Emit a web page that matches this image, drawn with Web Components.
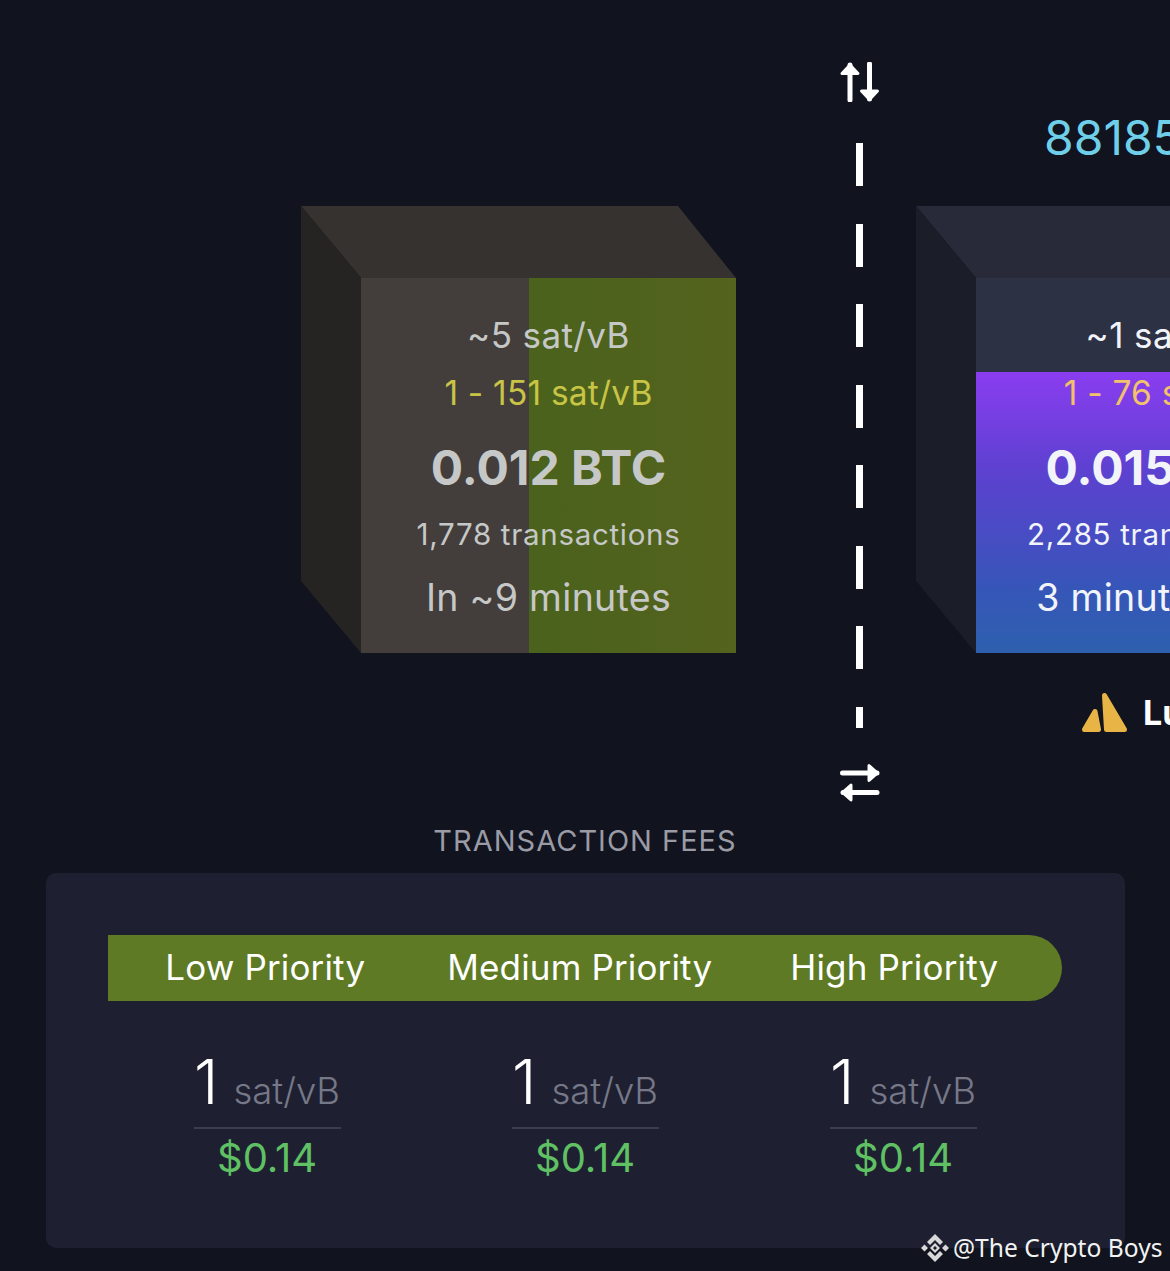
<!DOCTYPE html>
<html lang="en">
<head>
<meta charset="utf-8">
<title>Transaction fees</title>
<style>
    html, body { margin: 0; background: #11131e; }
    body { width: 1170px; height: 1271px; overflow: hidden; font-family: Inter, "Liberation Sans", sans-serif; }
</style>
</head>
<body>
<fee-page>
    <chain-row>
        <chain-block slot="left" top="#36322f" side="#262423" front="linear-gradient(90deg, #433e3c 168px, #4a621c 168px, #54631e 100%)" color="#c6c8c7" range="#c8c445">
            <span slot="fee">~5 sat/vB</span>
            <span slot="range">1 - 151 sat/vB</span>
            <span slot="size">0.012 BTC</span>
            <span slot="count">1,778 transactions</span>
            <span slot="time">In ~9 minutes</span>
        </chain-block>
        <chain-divider slot="divider"></chain-divider>
        <chain-block slot="right" top="#282a39" side="#1b1d29" front="linear-gradient(180deg, #2d3144 94px, #8a3df0 94px, #5d41d0 192px, #3656b8 312px, #2d60ae 100%)" color="#f2f4fa" range="#f2c26b" height="88185" pool="Luxor">
            <span slot="fee">~1 sat/vB</span>
            <span slot="range">1 - 76 sat/vB</span>
            <span slot="size">0.015 BTC</span>
            <span slot="count">2,285 transactions</span>
            <span slot="time">3 minutes ago</span>
        </chain-block>
    </chain-row>
    <fee-card title="TRANSACTION FEES">
        <fee-cell sats="1" usd="$0.14"></fee-cell>
        <fee-cell sats="1" usd="$0.14"></fee-cell>
        <fee-cell sats="1" usd="$0.14"></fee-cell>
    </fee-card>
    <water-mark>@The Crypto Boys</water-mark>
</fee-page>

<script>
class FeePage extends HTMLElement {
    constructor() {
        super()
        const shadowRoot = this.attachShadow({mode: "open"})
        shadowRoot.innerHTML = /* html */`
            <style>
                :host {
                    display: block;
                    position: relative;
                    width: 1170px;
                    height: 1271px;
                    overflow: hidden;
                    color: #fff;
                }
            </style>
            <slot></slot>
        `
    }
}

class ChainRow extends HTMLElement {
    constructor() {
        super()
        const shadowRoot = this.attachShadow({mode: "open"})
        shadowRoot.innerHTML = /* html */`
            <style>
                :host {
                    display: flex;
                    align-items: flex-start;
                    height: 825px;
                    padding-left: 301px;
                    width: 869px;
                }
                ::slotted([slot="left"]) { margin-top: 206px; }
                ::slotted([slot="divider"]) { margin: 62px 36px 0 104px; }
                ::slotted([slot="right"]) { margin-top: 206px; }
            </style>
            <slot name="left"></slot>
            <slot name="divider"></slot>
            <slot name="right"></slot>
        `
    }
}

class ChainBlock extends HTMLElement {
    constructor() {
        super()
        const shadowRoot = this.attachShadow({mode: "open"})
        const height = this.getAttribute("height")
        const pool = this.getAttribute("pool")

        shadowRoot.innerHTML = /* html */`
            <style>
                :host {
                    display: block;
                    position: relative;
                    flex: none;
                    width: 435px;
                    height: 447px;
                }
                .box {
                    display: grid;
                    grid-template-columns: 60px 375px;
                    grid-template-rows: 72px 375px;
                }
                .top {
                    grid-area: 1 / 1 / 2 / 3;
                    background: ${this.getAttribute("top")};
                    clip-path: polygon(0 0, 377px 0, 435px 72px, 60px 72px);
                }
                .side {
                    grid-area: 1 / 1 / 3 / 2;
                    background: ${this.getAttribute("side")};
                    clip-path: polygon(0 0, 60px 72px, 60px 447px, 0 375px);
                }
                .front {
                    grid-area: 2 / 2 / 3 / 3;
                    display: flex;
                    flex-direction: column;
                    align-items: center;
                    background: ${this.getAttribute("front")};
                    color: ${this.getAttribute("color")};
                    white-space: nowrap;
                }
                .fee { font-size: 35px; line-height: 40px; margin-top: 37px; letter-spacing: .4px; }
                .range { font-size: 33.5px; line-height: 40px; margin-top: 18px; letter-spacing: .2px; color: ${this.getAttribute("range")}; }
                .size { font-size: 48px; line-height: 54px; font-weight: 700; margin-top: 28px; }
                .count { font-size: 29.5px; line-height: 36px; margin-top: 21px; letter-spacing: .7px; }
                .time { font-size: 37.5px; line-height: 44px; margin-top: 24px; letter-spacing: .3px; }
                .height {
                    position: absolute;
                    left: 128px;
                    top: -97px;
                    font-size: 48px;
                    line-height: 58px;
                    color: #6fcfe8;
                }
                .pool {
                    position: absolute;
                    left: 165px;
                    top: 486px;
                    display: flex;
                    align-items: center;
                    gap: 16px;
                    font-size: 34px;
                    line-height: 40px;
                    font-weight: 700;
                }
            </style>
            ${height ? `<div class="height">${height}</div>` : ""}
            <div class="box">
                <div class="top"></div>
                <div class="side"></div>
                <div class="front">
                    <div class="fee"><slot name="fee"></slot></div>
                    <div class="range"><slot name="range"></slot></div>
                    <div class="size"><slot name="size"></slot></div>
                    <div class="count"><slot name="count"></slot></div>
                    <div class="time"><slot name="time"></slot></div>
                </div>
            </div>
            ${pool ? `<div class="pool">
                <svg width="46" height="41" viewBox="0 0 46 41">
                    <path d="M3.5 37.5 14 19.5 17.5 37.5Z M23.5 3.5 25.5 37.5 43.5 37.5Z" fill="#e8b445" stroke="#e8b445" stroke-width="5" stroke-linejoin="round"/>
                </svg>
                <span>${pool}</span>
            </div>` : ""}
        `
    }
}

class ChainDivider extends HTMLElement {
    constructor() {
        super()
        const shadowRoot = this.attachShadow({mode: "open"})
        shadowRoot.innerHTML = /* html */`
            <style>
                :host {
                    display: flex;
                    flex: none;
                    flex-direction: column;
                    align-items: center;
                    width: 40px;
                }
                svg { display: block; }
                .line {
                    width: 6.5px;
                    height: 585px;
                    margin: 41px 1px 35px 0;
                    background: repeating-linear-gradient(180deg, #fff 0 43px, transparent 43px 80.5px);
                }
            </style>
            <svg width="40" height="40" viewBox="0 0 40 40" fill="#fff" stroke="#fff" stroke-linejoin="round" stroke-linecap="round">
                <path d="M10 3V38" fill="none" stroke-width="5"/>
                <path d="M2 11.5 10 3 18 11.5Z" stroke-width="3"/>
                <path d="M29.5 2V37" fill="none" stroke-width="5"/>
                <path d="M21.5 29 29.5 37.5 37.5 29Z" stroke-width="3"/>
            </svg>
            <div class="line"></div>
            <svg width="40" height="40" viewBox="0 0 40 40" fill="#fff" stroke="#fff" stroke-linejoin="round" stroke-linecap="round">
                <path d="M2.5 10H37" fill="none" stroke-width="5"/>
                <path d="M29 2.5 37.5 10 29 17.5Z" stroke-width="3"/>
                <path d="M3 29.5H37" fill="none" stroke-width="5"/>
                <path d="M11 22 2.5 29.5 11 37Z" stroke-width="3"/>
            </svg>
        `
    }
}

class FeeCard extends HTMLElement {
    constructor() {
        super()
        const shadowRoot = this.attachShadow({mode: "open"})
        shadowRoot.innerHTML = /* html */`
            <style>
                :host { display: block; }
                h2 {
                    margin: 0 0 16px;
                    text-align: center;
                    font-size: 29px;
                    line-height: 32px;
                    font-weight: 400;
                    letter-spacing: 1px;
                    color: #9a9ba5;
                }
                .card {
                    box-sizing: border-box;
                    width: 1079px;
                    height: 375px;
                    margin-left: 46px;
                    padding: 62px 63px 0 62px;
                    background: #1e2031;
                    border-radius: 10px;
                }
                .head {
                    box-sizing: border-box;
                    display: grid;
                    grid-template-columns: repeat(3, 314.5px);
                    height: 66px;
                    padding-bottom: 2px;
                    align-items: center;
                    text-align: center;
                    font-size: 35px;
                    letter-spacing: .15px;
                    background: #5e7a24;
                    border-radius: 0 33px 33px 0;
                }
                .cells {
                    display: grid;
                    grid-template-columns: repeat(3, 318px);
                    margin-top: 46px;
                }
            </style>
            <h2>${this.getAttribute("title")}</h2>
            <div class="card">
                <div class="head">
                    <div>Low Priority</div>
                    <div>Medium Priority</div>
                    <div>High Priority</div>
                </div>
                <div class="cells"><slot></slot></div>
            </div>
        `
    }
}

class FeeCell extends HTMLElement {
    constructor() {
        super()
        const shadowRoot = this.attachShadow({mode: "open"})
        shadowRoot.innerHTML = /* html */`
            <style>
                :host {
                    display: flex;
                    flex-direction: column;
                    align-items: center;
                }
                .rate {
                    box-sizing: border-box;
                    width: 147px;
                    height: 82px;
                    display: flex;
                    align-items: baseline;
                    justify-content: center;
                    gap: 15px;
                    border-bottom: 2px solid #3a3c50;
                    line-height: 70px;
                }
                .num { font-size: 62px; font-weight: 300; }
                .unit { font-size: 36.5px; font-weight: 300; color: #767888; }
                .usd { margin-top: 5px; font-size: 40px; line-height: 48px; font-weight: 400; color: #5fc163; }
            </style>
            <div class="rate">
                <span class="num">${this.getAttribute("sats")}</span>
                <span class="unit">sat/vB</span>
            </div>
            <div class="usd">${this.getAttribute("usd")}</div>
        `
    }
}

class WaterMark extends HTMLElement {
    constructor() {
        super()
        const shadowRoot = this.attachShadow({mode: "open"})
        shadowRoot.innerHTML = /* html */`
            <style>
                :host {
                    position: absolute;
                    left: 921px;
                    top: 1231px;
                    display: flex;
                    align-items: center;
                    gap: 4px;
                    font-family: "Noto Sans", sans-serif;
                    font-size: 24.6px;
                    line-height: 34px;
                    color: #f2f2f2;
                    white-space: nowrap;
                }
            </style>
            <svg width="28" height="28" viewBox="0 0 28 28" fill="#d8d8d8" fill-rule="evenodd">
                <path d="M14 0 22 8 19 11 14 6 9 11 6 8Z M14 28 22 20 19 17 14 22 9 17 6 20Z M0 14 3.5 10.5 7 14 3.5 17.5Z M28 14 24.5 10.5 21 14 24.5 17.5Z M14 9 19 14 14 19 9 14Z M14 12 12 14 14 16 16 14Z"/>
            </svg>
            <span><slot></slot></span>
        `
    }
}

customElements.define("fee-page", FeePage)
customElements.define("chain-row", ChainRow)
customElements.define("chain-block", ChainBlock)
customElements.define("chain-divider", ChainDivider)
customElements.define("fee-card", FeeCard)
customElements.define("fee-cell", FeeCell)
customElements.define("water-mark", WaterMark)
</script>
</body>
</html>
